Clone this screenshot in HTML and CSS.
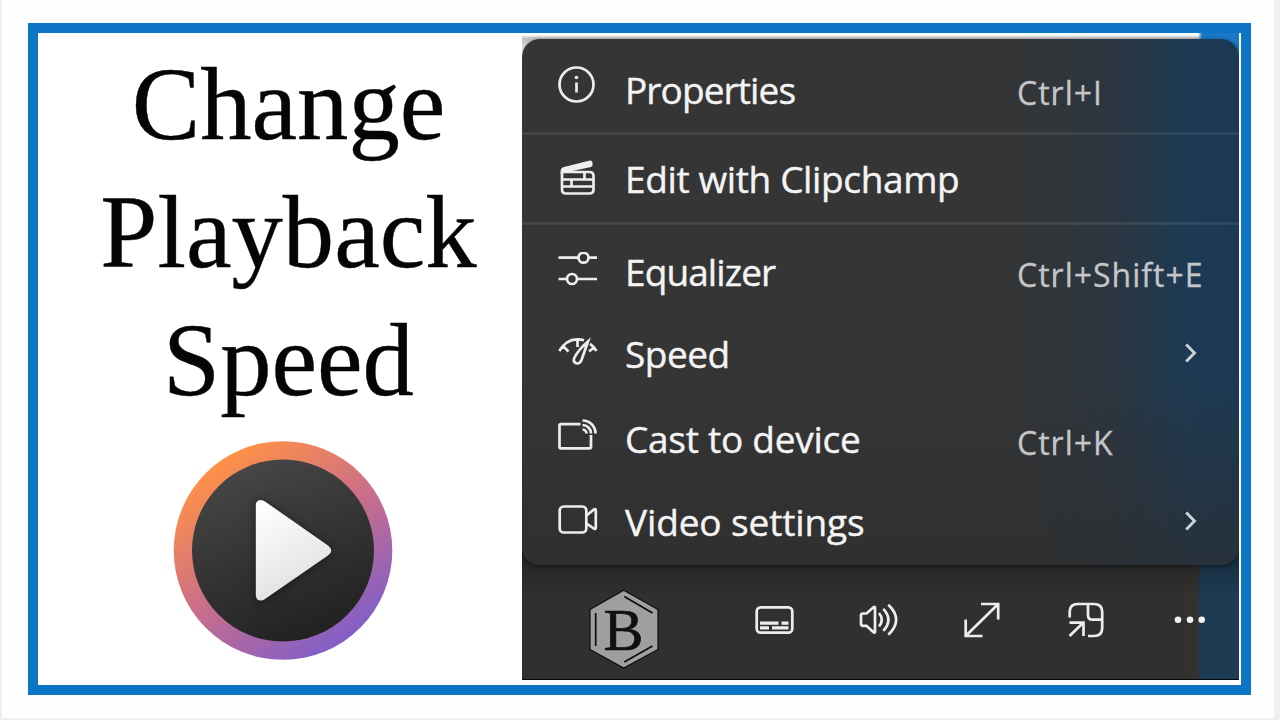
FILE: index.html
```html
<!DOCTYPE html>
<html lang="en">
<head>
	<meta charset="utf-8">
	<title>Change Playback Speed</title>
	<link rel="stylesheet" href="styles.css">
</head>
<body>
	<div class="frame">
		<div class="intro">
			<h1>Change<br>Playback<br>Speed</h1>
			<svg class="logo" width="220" height="220" viewBox="0 0 220 220">
				<defs>
					<linearGradient id="ring" x1="0.2" y1="0.1" x2="0.75" y2="0.9">
						<stop offset="0" stop-color="#ff9147"/>
						<stop offset="0.5" stop-color="#cc6f88"/>
						<stop offset="1" stop-color="#865fc4"/>
					</linearGradient>
					<linearGradient id="disc" x1="0.3" y1="0" x2="0.7" y2="1">
						<stop offset="0" stop-color="#474747"/>
						<stop offset="1" stop-color="#202020"/>
					</linearGradient>
					<linearGradient id="tri" x1="0.2" y1="0" x2="0.6" y2="1">
						<stop offset="0" stop-color="#ffffff"/>
						<stop offset="1" stop-color="#dedede"/>
					</linearGradient>
				</defs>
				<circle cx="110" cy="109.500" r="109.300" fill="url(#ring)"/>
				<circle cx="110" cy="109.500" r="91" fill="url(#disc)"/>
				<path class="play" d="M82.800 64.500Q82.800 59 88 59Q90 59 92 60.500L155 104.500Q158.300 107 158.300 109.500Q158.300 112 155 114.500L92 158Q90 159.500 88 159.500Q82.800 159.500 82.800 154Z" fill="url(#tri)"/>
			</svg>
		</div>

		<div class="player">
			<div class="menu">
				<div class="item first">
					<svg class="icon" viewBox="0 0 42 40">
						<circle cx="20.500" cy="18.500" r="17"/>
						<path d="M20.500 16.500V26.500"/>
						<circle class="fill" cx="20.500" cy="11.500" r="1.800"/>
					</svg>
					<span class="label tight">Properties</span>
					<span class="key">Ctrl+I</span>
				</div>
				<div class="line"></div>
				<div class="item second">
					<svg class="icon" viewBox="0 0 42 40">
						<path class="fill" d="M4.700 15V11.500Q4.700 9 8 8L33 1.700Q36 1 36.500 3.500V6Q36.500 7.500 35 8L14 12.500Z"/>
						<path d="M6 12.500V30.500Q6 34.500 10 34.500H33.500Q37.500 34.500 37.500 30.500V17Q37.500 13 33.500 13H6M6 20.500H37.500M6 27.500H37.500M28.500 13V20.500M15.500 20.500V27.500"/>
					</svg>
					<span class="label clip">Edit with Clipchamp</span>
				</div>
				<div class="line"></div>
				<div class="group">
					<div class="item">
						<svg class="icon" viewBox="0 0 42 40">
							<path d="M2.500 5.700H22.500M32.500 5.700H41M2.500 27H11M21 27H41"/>
							<circle cx="27.500" cy="5.700" r="5"/>
							<circle cx="16" cy="27" r="5"/>
						</svg>
						<span class="label tight">Equalizer</span>
						<span class="key">Ctrl+Shift+E</span>
					</div>
					<div class="item">
						<svg class="icon" viewBox="0 0 42 40">
							<path d="M3.300 15Q10 3.500 21 3.300Q25 3.200 28 4.300M34 7.800Q38 10.500 40.500 15M7.500 10.500L12.500 15.500M21.500 3.500V11M38.500 11L33 15.500M32 5.500L25.500 24Q24 27.500 21 27.500Q17 26.500 18 22.500Q22 14 32 5.500Z"/>
						</svg>
						<span class="label up">Speed</span>
						<svg class="chevron" viewBox="0 0 14 22"><path d="M2.200 2.500L10.500 11L2.200 19.500"/></svg>
					</div>
					<div class="item">
						<svg class="icon" viewBox="0 0 42 40">
							<path d="M24.500 5.200H5Q3.500 5.200 3.500 6.700V27.800Q3.500 29.300 5 29.300H33.500Q35 29.300 35 27.800V16"/>
							<path d="M26.500 1.500A13 13 0 0 1 39.500 14.500M26.500 6A8.500 8.500 0 0 1 35 14.500M26.500 10.500A4 4 0 0 1 30.500 14.500"/>
						</svg>
						<span class="label cast">Cast to device</span>
						<span class="key">Ctrl+K</span>
					</div>
					<div class="item">
						<svg class="icon" viewBox="0 0 42 40">
							<rect x="3.700" y="3.500" width="26.600" height="26" rx="4"/>
							<path d="M30.500 12.500L38 6.500Q39.800 5.500 39.800 7.500V24.500Q39.800 26.500 38 25.500L30.500 20.500"/>
						</svg>
						<span class="label up video">Video settings</span>
						<svg class="chevron" viewBox="0 0 14 22"><path d="M2.200 2.500L10.500 11L2.200 19.500"/></svg>
					</div>
				</div>
			</div>

			<div class="bar">
				<svg class="hex" width="70" height="80" viewBox="0 0 70 80">
					<path d="M34.700 1.200L69 20.500V60.500L34.700 79L1 60.500V20.500Z" fill="#9da09d" stroke="#0c0c0c" stroke-width="1.200"/>
					<path d="M35.300 7.500L63.500 24M6.700 24V57M35.300 73L63.500 57" stroke="#0c0c0c" stroke-width="1.700"/>
					<text x="34.500" y="60.500" text-anchor="middle">B</text>
				</svg>
				<div class="controls">
					<svg viewBox="0 0 44 44">
						<rect x="4.700" y="9.300" width="35.600" height="25.400" rx="4"/>
						<path class="thick" d="M8 25.200H26.500M29.500 25.200H36.500M8 29.800H17M20 29.800H36.500"/>
					</svg>
					<svg viewBox="0 0 44 44">
						<path d="M5 17.500Q5 15.500 7 15.500H10.500L17.500 9.200Q19 8.200 19 10V33.500Q19 35.500 17.500 34.300L10.500 27.800H7Q5 27.800 5 25.800ZM23 15Q28.500 21.700 23 28.500M27.300 10.800Q37.500 21.700 27.300 32.800M32.300 6.800Q48 21.700 32.300 36.800"/>
					</svg>
					<svg viewBox="0 0 44 44">
						<path d="M21 6H38.200V21.500M5.700 21.500V38H22.500M5.700 38L38.200 6"/>
					</svg>
					<svg viewBox="0 0 44 44">
						<path d="M5.700 19.500V14Q5.700 6 13.700 6H30Q38.200 6 38.200 14V30Q38.200 38 30 38H24M24 6V17Q24 21.700 28.500 21.700H38.200M5.500 38L19.500 24.500M5.500 24.700H19.500V38"/>
					</svg>
					<svg viewBox="0 0 44 44">
						<circle class="fill" cx="10" cy="21.700" r="3.300"/>
						<circle class="fill" cx="22" cy="21.700" r="3.300"/>
						<circle class="fill" cx="33.700" cy="21.700" r="3.300"/>
					</svg>
				</div>
			</div>
		</div>
	</div>
</body>
</html>
```
FILE: styles.css
```css
* {
	margin: 0;
	padding: 0;
	box-sizing: border-box;
}

body {
	width: 1280px;
	height: 720px;
	padding: 23px 23px 0 26px;
	overflow: hidden;
	background-color: #fefefe;
	border-left: 2px solid #efefef;
	border-right: 6px solid #f0f0f0;
	border-bottom: 2px solid #f0f0f0;
}

.frame {
	display: flex;
	width: 1223px;
	height: 672px;
	border: 10px solid #0d76c4;
	background-color: #fff;
}

/* left side */
.intro {
	width: 484px;
	padding-top: 7px;
}

	.intro h1 {
		padding-left: 17px;
		font-family: "Liberation Serif", "Times New Roman", serif;
		font-size: 102.7px;
		font-weight: normal;
		line-height: 128px;
		text-align: center;
		color: #050505;
		-webkit-text-stroke: 0.4px #050505;
	}

	.logo {
		display: block;
		margin: 17px 0 0 135px;
		stroke: none;
	}

	.play {
		filter: drop-shadow(0 1px 5px rgba(0,0,0,0.5));
	}

/* right side */
.player {
	width: 717px;
	height: 647px;
	padding-top: 6px;
	overflow: hidden;
	background: linear-gradient(90deg, rgba(26,121,198,0) 676px, #1a79c6 680px) 0 0 / 100% 60px no-repeat,
		linear-gradient(180deg, #fff 2px, #c4c4c4 5px, #c4c4c4 8px, #fff 18px) 0 0 / 100% 60px no-repeat,
		linear-gradient(90deg, #2a2a2a 676px, #1d3a54 679px);
}

.menu {
	position: relative;
	z-index: 1;
	height: 526px;
	border-radius: 18px;
	background: linear-gradient(180deg, rgba(45,45,45,0) 330px, rgba(45,45,45,0.65) 526px),
		linear-gradient(90deg, #353535 480px, #2b3640 590px, #1d3a54 665px, #1c3954 100%);
	box-shadow: 0 1px 4px rgba(0,0,0,0.5);
	font-family: "Segoe UI", "Open Sans", "Noto Sans", sans-serif;
}

	.line {
		height: 3px;
		background-color: rgba(255,255,255,0.08);
	}

	.group {
		padding-top: 5px;
	}

	.item {
		display: grid;
		grid-template-columns: 69px 392px 167px 20px;
		align-items: center;
		height: 83.75px;
		padding-left: 34px;
	}

	.first {
		height: 93px;
	}

	.second {
		height: 87px;
	}

	svg {
		fill: none;
		stroke: #ededed;
		stroke-width: 2.7;
	}

	.icon {
		width: 42px;
		height: 40px;
	}

	.fill {
		fill: #f0f0f0;
		stroke: none;
	}

	.label {
		font-size: 37px;
		line-height: 48px;
		letter-spacing: -0.5px;
		color: #f4f4f4;
		-webkit-text-stroke: 0.4px #f4f4f4;
		white-space: nowrap;
	}

	.tight {
		letter-spacing: -0.9px;
	}

	.clip {
		letter-spacing: -0.37px;
	}

	.cast {
		letter-spacing: -0.25px;
	}

	.video {
		letter-spacing: -0.12px;
	}

	.up {
		margin-top: -3px;
	}

	.key {
		padding-top: 7px;
		font-size: 32px;
		line-height: 44px;
		letter-spacing: 1px;
		color: #c4c6c8;
		-webkit-text-stroke: 0.3px #c4c6c8;
		white-space: nowrap;
	}

	.first .label {
		padding-top: 8px;
	}

	.first .key {
		padding-top: 14px;
	}

	.chevron {
		grid-column: 4;
		width: 14px;
		height: 22px;
		margin-top: -5px;
		stroke: #ccd2d6;
		stroke-width: 2.9;
	}

/* bottom controls, the bar runs up behind the menu corners */
.bar {
	display: flex;
	height: 133px;
	margin-top: -18px;
	padding: 42px 0 0 67px;
	border-bottom: 1px solid #050510;
	background: linear-gradient(180deg, rgba(0,0,0,0.2) 18px, rgba(0,0,0,0) 50px),
		linear-gradient(90deg, #303030 650px, #343030 675px, #1e3b54 679px);
}

	.hex text {
		font-family: "Liberation Serif", serif;
		font-size: 60px;
		fill: #101010;
		stroke: #101010;
		stroke-width: 0.6;
	}

	.controls {
		display: flex;
		gap: 60px;
		margin: 9px 0 0 93px;
	}

	.controls svg {
		width: 44px;
		height: 44px;
	}

	.controls .thick {
		stroke-width: 3.2;
	}
```
